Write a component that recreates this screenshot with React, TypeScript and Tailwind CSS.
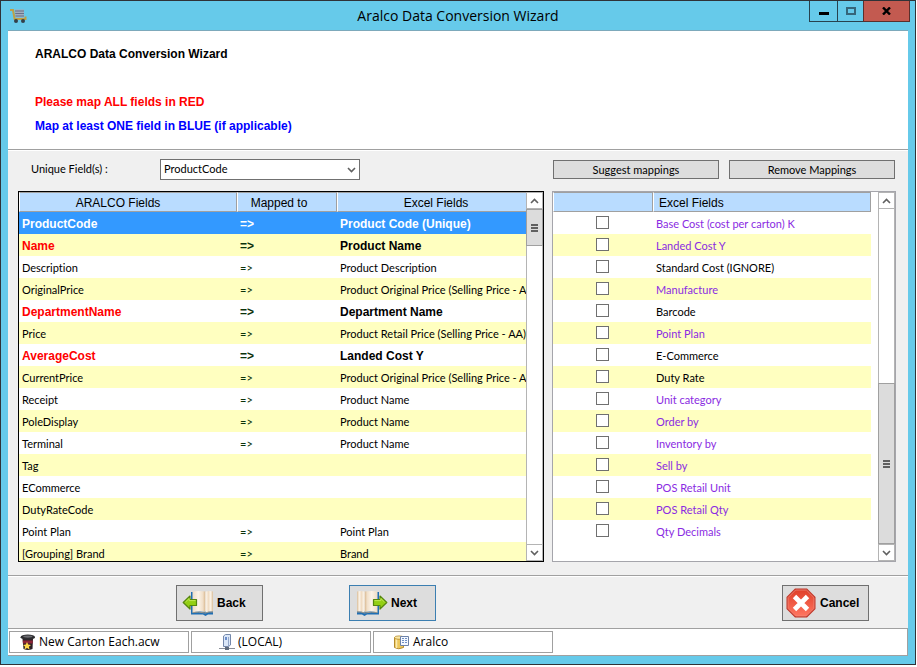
import { useState } from "react";

interface Mapping {
  field: string;
  excel?: string;
  required?: boolean;
}

interface ExcelField {
  name: string;
  used?: boolean;
}

const mappings: Mapping[] = [
  { field: "ProductCode", excel: "Product Code (Unique)", required: true },
  { field: "Name", excel: "Product Name", required: true },
  { field: "Description", excel: "Product Description" },
  { field: "OriginalPrice", excel: "Product Original Price (Selling Price - AA)" },
  { field: "DepartmentName", excel: "Department Name", required: true },
  { field: "Price", excel: "Product Retail Price (Selling Price - AA)" },
  { field: "AverageCost", excel: "Landed Cost Y", required: true },
  { field: "CurrentPrice", excel: "Product Original Price (Selling Price - AA)" },
  { field: "Receipt", excel: "Product Name" },
  { field: "PoleDisplay", excel: "Product Name" },
  { field: "Terminal", excel: "Product Name" },
  { field: "Tag" },
  { field: "ECommerce" },
  { field: "DutyRateCode" },
  { field: "Point Plan", excel: "Point Plan" },
  { field: "[Grouping] Brand", excel: "Brand" },
];

const excelFields: ExcelField[] = [
  { name: "Base Cost (cost per carton) K", used: true },
  { name: "Landed Cost Y", used: true },
  { name: "Standard Cost (IGNORE)" },
  { name: "Manufacture", used: true },
  { name: "Barcode" },
  { name: "Point Plan", used: true },
  { name: "E-Commerce" },
  { name: "Duty Rate" },
  { name: "Unit category", used: true },
  { name: "Order by", used: true },
  { name: "Inventory by", used: true },
  { name: "Sell by", used: true },
  { name: "POS Retail Unit", used: true },
  { name: "POS Retail Qty", used: true },
  { name: "Qty Decimals", used: true },
];

function CartIcon() {
  return (
    <svg width="17" height="14" viewBox="0 0 17 14" aria-hidden="true">
      <path d="M5 0.5H14V8.5H5.6Z" fill="#a3adbd" />
      <path d="M5 2H14M5.2 4.5H14M5.4 7H14" stroke="#66728a" strokeWidth="1.2" />
      <path d="M0 1H3L4.6 10H15.5V7.5" fill="none" stroke="#bfa045" strokeWidth="2" />
      <circle cx="6" cy="12" r="2" fill="#33404a" />
      <circle cx="13" cy="12" r="2" fill="#33404a" />
    </svg>
  );
}

// The arrow points left; the "next" button shows the mirrored drawing
function BookIcon({ forward = false }: { forward?: boolean }) {
  return (
    <svg width="32" height="28" viewBox="0 0 32 28" aria-hidden="true" className={forward ? "-scale-x-100" : ""}>
      <defs>
        <linearGradient id="page-wide" x1="0" x2="1">
          <stop offset="0" stopColor="#efdcc4" />
          <stop offset="0.45" stopColor="#fbf3e8" />
          <stop offset="0.8" stopColor="#f1dfc8" />
          <stop offset="1" stopColor="#d6b48a" />
        </linearGradient>
        <linearGradient id="page-narrow" x1="0" x2="1">
          <stop offset="0" stopColor="#fdf8f0" />
          <stop offset="0.4" stopColor="#f0dcc3" />
          <stop offset="0.7" stopColor="#fbf3e8" />
          <stop offset="1" stopColor="#d9bd98" />
        </linearGradient>
      </defs>
      <path d="M9 3V25.5H21L23.5 27L26 25.5H31V22H11V3Z" fill="#1f6fb4" />
      <path d="M10.5 2.5Q16 1.5 23.5 2.5V23Q16 22 10.5 23.5Z" fill="url(#page-wide)" />
      <path d="M23.5 2.5Q28 1.5 31 2.5V22.5Q27 22 23.5 23.5Z" fill="url(#page-narrow)" />
      <path d="M10.5 23.5Q16 22.5 23.5 24Q27 22.5 31 23" fill="none" stroke="#b59d80" strokeWidth="0.8" />
      <path
        d="M14.5 10.5H8V7L1.2 13.5L8 20V16.5H14.5Z"
        fill="#93cf13"
        stroke="#55860e"
        strokeWidth="1.2"
        strokeLinejoin="round"
      />
      <path d="M3.5 13L7.2 9.5V11.6H13.5" fill="none" stroke="#c4ec5a" strokeWidth="0.9" />
    </svg>
  );
}

function CancelIcon() {
  return (
    <svg width="30" height="30" viewBox="0 0 30 30" aria-hidden="true">
      <defs>
        <linearGradient id="stop-red" x1="0" x2="0" y1="0" y2="1">
          <stop offset="0" stopColor="#e0402a" />
          <stop offset="1" stopColor="#ff7560" />
        </linearGradient>
      </defs>
      <path d="M9 0.5H21L29.5 9V21L21 29.5H9L0.5 21V9Z" fill="#c03426" />
      <path
        d="M9.6 2H20.4L28 9.6V20.4L20.4 28H9.6L2 20.4V9.6Z"
        fill="url(#stop-red)"
        stroke="#f08a7c"
        strokeWidth="0.8"
      />
      <path d="M8.5 8.5L21.5 21.5M21.5 8.5L8.5 21.5" stroke="#fff" strokeWidth="4.8" />
    </svg>
  );
}

function HatIcon() {
  return (
    <svg width="16" height="17" viewBox="0 0 16 17" aria-hidden="true">
      <path d="M2.5 5H13L12.5 15Q8 17 3.5 15Z" fill="#2c2026" />
      <path d="M2.8 6.5H12.8L12.6 9.5H3Z" fill="#8d2436" />
      <ellipse cx="7.8" cy="3.2" rx="7.2" ry="2.6" fill="#2d2d30" />
      <ellipse cx="7.8" cy="2.6" rx="4.6" ry="1.1" fill="#6d6d72" />
      <path d="M7 8L8.2 10.6L11 10.9L8.9 12.7L9.6 15.4L7 14L4.4 15.4L5.1 12.7L3 10.9L5.8 10.6Z" fill="#ffd84a" />
    </svg>
  );
}

function ServerIcon() {
  return (
    <svg width="16" height="16" viewBox="0 0 16 16" aria-hidden="true">
      <path d="M4.5 2L6.5 0.5H11.5V11L9.5 12.5H4.5Z" fill="#dbe7f8" stroke="#7488ab" />
      <path d="M9.5 3V12" stroke="#93a7c8" />
      <path d="M7 3V6" stroke="#3c67b8" strokeWidth="1.4" />
      <path d="M8 12.5V14.5M0 14.5H16" stroke="#8a8f98" />
      <rect x="6" y="13" width="4" height="3" fill="#5f6b7c" />
    </svg>
  );
}

function DatabaseIcon() {
  return (
    <svg width="15" height="15" viewBox="0 0 15 15" aria-hidden="true">
      <path d="M0.5 2.5V12.5Q4.5 15 9.5 12.5V2.5Z" fill="#ecc75b" stroke="#b58a2c" />
      <path d="M2.5 4V13" stroke="#fbeab0" strokeWidth="1.6" />
      <ellipse cx="5" cy="2.6" rx="4.5" ry="1.7" fill="#fae9a8" stroke="#b58a2c" strokeWidth="0.8" />
      <path d="M6.5 1.5H14.5V10.5H6.5Z" fill="#f4f8ff" stroke="#6c82a8" />
      <path d="M8 3.5H10M8 5.5H10M8 7.5H10M11 3.5H13M11 5.5H13M11 7.5H13" stroke="#6f8fc4" />
    </svg>
  );
}

function Arrow({ up = false }: { up?: boolean }) {
  return (
    <svg width="9" height="6" viewBox="0 0 9 6" aria-hidden="true">
      <path d={up ? "M1 5L4.5 1.5L8 5" : "M1 1L4.5 4.5L8 1"} fill="none" stroke="#606060" strokeWidth="1.6" />
    </svg>
  );
}

function ScrollBar({ atEnd = false }: { atEnd?: boolean }) {
  return (
    <div className="flex w-[17px] shrink-0 flex-col bg-white">
      <button
        type="button"
        aria-label="Scroll up"
        className="flex h-[17px] shrink-0 items-center justify-center border border-[#b4b4b4] bg-white"
      >
        <Arrow up />
      </button>
      <div
        className={`flex flex-1 flex-col border-x border-[#b4b4b4] ${atEnd ? "justify-end" : "justify-start"}`}
      >
        <div
          className={`-mx-px flex items-center justify-center border border-[#a0a0a0] bg-[#dcdcdc] ${
            atEnd ? "h-[161px]" : "h-[37px]"
          }`}
        >
          <svg width="7" height="8" viewBox="0 0 7 8" aria-hidden="true">
            <path d="M0 1H7M0 4H7M0 7H7" stroke="#606060" strokeWidth="2" />
          </svg>
        </div>
      </div>
      <button
        type="button"
        aria-label="Scroll down"
        className="flex h-[17px] shrink-0 items-center justify-center border border-[#b4b4b4] bg-white"
      >
        <Arrow />
      </button>
    </div>
  );
}

const headCell =
  "h-5 border-t border-b border-l border-t-[#a0a0a0] border-b-[#a0a0a0] border-l-white bg-[#b9dcff] p-0 pt-[2px] font-['Liberation_Sans',Arial,sans-serif] text-[12px] leading-4 font-normal";
const bodyText = "font-['Lato','Liberation_Sans',sans-serif] text-[11px] [font-variant-ligatures:none]";
const boldText = "font-['Liberation_Sans',Arial,sans-serif] text-[12px] font-bold";

function MappingTable({ selected, onSelect }: { selected: string; onSelect: (field: string) => void }) {
  return (
    <table className={`w-full table-fixed border-separate border-spacing-0 ${bodyText}`}>
      <thead>
        <tr>
          <th className={`${headCell} w-[218px] border-r border-r-[#a0a0a0] pr-5`}>ARALCO Fields</th>
          <th className={`${headCell} w-[100px] border-r border-r-[#a0a0a0] pr-4`}>Mapped to</th>
          <th className={`${headCell} pl-2`}>Excel Fields</th>
        </tr>
      </thead>
      <tbody>
        {mappings.map((m) => {
          const active = m.field === selected;
          const weight = m.required ? boldText : "";
          return (
            <tr
              key={m.field}
              onClick={() => onSelect(m.field)}
              className={active ? "bg-[#3399ff] text-white" : "bg-white even:bg-[#ffffc0]"}
            >
              <td
                className={`h-[22px] p-0 pt-[2px] pl-[3px] leading-4 ${weight} ${
                  m.required && !active ? "text-[#ff0000]" : ""
                }`}
              >
                {m.field}
              </td>
              <td className={`h-[22px] p-0 pt-[2px] pl-[3px] leading-4 ${weight} ${active ? "" : "text-[#0a320a]"}`}>
                {m.excel ? "=>" : ""}
              </td>
              <td className={`h-[22px] overflow-hidden p-0 pt-[2px] pl-[3px] leading-4 whitespace-nowrap ${weight}`}>
                {m.excel}
              </td>
            </tr>
          );
        })}
      </tbody>
    </table>
  );
}

function ExcelTable() {
  return (
    <table className={`w-full table-fixed border-separate border-spacing-0 ${bodyText}`}>
      <thead>
        <tr>
          <th aria-label="Selected" className={`${headCell} w-[100px] border-r border-r-[#a0a0a0]`} />
          <th className={`${headCell} border-r border-r-[#a0a0a0] pl-[5px] text-left`}>Excel Fields</th>
        </tr>
      </thead>
      <tbody>
        {excelFields.map((f, i) => (
          <tr key={f.name} className="even:bg-[#ffffc0]">
            <td className="h-[22px] p-0 pr-[2px] pb-[2px]">
              <input
                id={`excel-${i}`}
                type="checkbox"
                className="mx-auto block size-[13px] appearance-none border border-[#707070] bg-white checked:bg-[#3399ff]"
              />
            </td>
            <td className={`h-[22px] p-0 pt-[2px] pl-[3px] leading-4 ${f.used ? "text-[#8a2be2]" : ""}`}>
              <label htmlFor={`excel-${i}`}>{f.name}</label>
            </td>
          </tr>
        ))}
      </tbody>
    </table>
  );
}

const smallButton = "h-[19px] flex-1 border border-[#707070] bg-[#dddddd] text-[11px] leading-4";
const wizardButton = "flex h-9 w-[87px] items-center border bg-[#dddddd] text-[12px] font-bold";
const statusBox = "flex h-[22px] w-[180px] items-center border border-[#a0a0a0]";

export default function App() {
  const [selected, setSelected] = useState("ProductCode");

  return (
    <div className="bg-white pr-px font-['Liberation_Sans',Arial,sans-serif] text-black">
      <div className="border border-[#2f3237] bg-[#66caea] px-[7px] pb-[7px]">
        <header className="grid h-[29px] grid-cols-[1fr_auto_1fr] items-center">
          <div className="pl-[2px]">
            <CartIcon />
          </div>
          <h1 className="font-['Open_Sans',sans-serif] text-[14px] leading-5">Aralco Data Conversion Wizard</h1>
          <div className="-mr-[2px] flex self-start justify-self-end">
            <button
              type="button"
              aria-label="Minimize"
              className="flex h-[21px] w-[29px] items-center justify-center border border-t-0 border-[#27424f]"
            >
              <span className="mt-1 h-[3px] w-[10px] bg-black" />
            </button>
            <button
              type="button"
              aria-label="Maximize"
              className="flex h-[21px] w-[25px] items-center justify-center border-b border-[#27424f]"
            >
              <span className="h-2 w-[10px] border-2 border-[#35667a]" />
            </button>
            <button
              type="button"
              aria-label="Close"
              className="flex h-[21px] w-[47px] items-center justify-center border border-t-0 border-[#5a2f2c] bg-[#c35a50]"
            >
              <svg width="9" height="8" viewBox="0 0 9 8" aria-hidden="true">
                <path d="M1 0.5L8 7.5M8 0.5L1 7.5" stroke="#000" strokeWidth="2.4" />
              </svg>
            </button>
          </div>
        </header>

        <div className="border-t border-[#7da9bb] bg-white">
          <section className="border-b border-[#a0a0a0] px-[27px] py-[11px] text-[12px] leading-6 font-bold">
            <h2 className="mb-6">ARALCO Data Conversion Wizard</h2>
            <p className="text-[#ff0000]">Please map ALL fields in RED</p>
            <p className="text-[#0000ff]">Map at least ONE field in BLUE (if applicable)</p>
          </section>

          <main className="grid grid-cols-[526fr_344fr] gap-x-2 gap-y-[11px] border-t border-white bg-[#f0f0f0] pt-2 pr-3 pb-[13px] pl-[10px]">
            <div className={`flex items-center pl-[13px] ${bodyText}`}>
              <label htmlFor="unique-field" className="w-[129px]">
                Unique Field(s) :
              </label>
              <div className="relative">
                <select
                  id="unique-field"
                  value={selected}
                  onChange={(e) => setSelected(e.target.value)}
                  className="block h-[21px] w-[200px] appearance-none border border-[#707070] bg-white pl-[3px] text-[11px]"
                >
                  {mappings.map((m) => (
                    <option key={m.field}>{m.field}</option>
                  ))}
                </select>
                <div className="pointer-events-none absolute inset-y-0 right-1 flex items-center">
                  <Arrow />
                </div>
              </div>
            </div>
            <div className={`flex items-center gap-[10px] px-px ${bodyText}`}>
              <button type="button" className={smallButton}>
                Suggest mappings
              </button>
              <button type="button" className={smallButton}>
                Remove Mappings
              </button>
            </div>

            <div className="flex h-[371px] overflow-hidden border border-black bg-white">
              <div className="min-w-0 flex-1 overflow-hidden">
                <MappingTable selected={selected} onSelect={setSelected} />
              </div>
              <ScrollBar />
            </div>
            <div className="flex h-[371px] overflow-hidden border border-[#a5a5ab] bg-white">
              <div className="min-w-0 flex-1 overflow-hidden pr-[7px]">
                <ExcelTable />
              </div>
              <ScrollBar atEnd />
            </div>
          </main>

          <nav className="border-t border-[#a0a0a0] bg-[#f0f0f0]">
            <div className="flex border-t border-white pt-2 pr-[39px] pb-[7px] pl-[168px]">
              <button type="button" className={`${wizardButton} mr-[86px] gap-[3px] border-[#707070] pl-[5px]`}>
                <BookIcon />
                Back
              </button>
              <button type="button" className={`${wizardButton} gap-[3px] border-[#3c7fb1] pl-[6px]`}>
                <BookIcon forward />
                Next
              </button>
              <button type="button" className={`${wizardButton} ml-auto gap-1 border-[#707070] pl-[3px]`}>
                <CancelIcon />
                Cancel
              </button>
            </div>
          </nav>

          <footer className="mb-px flex gap-[2px] border border-l-0 border-[#a0a0a0] py-[2px] pl-px font-['Open_Sans',sans-serif] text-[12px] leading-4">
            <div className={`${statusBox} gap-[3px] pl-[10px]`}>
              <HatIcon />
              New Carton Each.acw
            </div>
            <div className={`${statusBox} gap-[3px] pl-[27px]`}>
              <ServerIcon />
              (LOCAL)
            </div>
            <div className={`${statusBox} gap-1 pl-5`}>
              <DatabaseIcon />
              Aralco
            </div>
          </footer>
        </div>
      </div>
    </div>
  );
}
